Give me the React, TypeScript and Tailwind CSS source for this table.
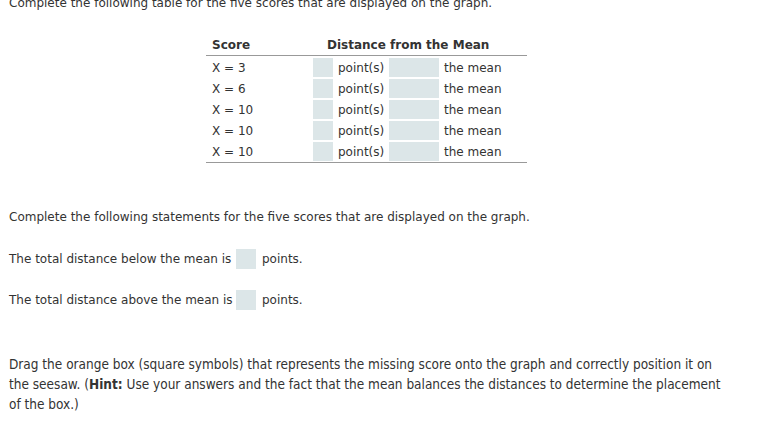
import React from "react";

const Box = ({ w = "w-[20px]", h = "h-[19px]" }: { w?: string; h?: string }) => (
  <span className={`inline-block ${w} ${h} bg-[#dce6e8]`} />
);

const rows = ["X = 3", "X = 6", "X = 10", "X = 10", "X = 10"];

export default function App() {
  return (
    <div className="w-[758px] h-[434px] overflow-hidden bg-white text-[#333] text-[12px] font-['Verdana','DejaVu_Sans',sans-serif]">
      <p className="pl-[9px] -mt-[4px] leading-[15px]">
        Complete the following table for the five scores that are displayed on the graph.
      </p>

      <div className="ml-[206px] mt-[23px] w-[321px]">
        <div className="flex h-[22px] items-center border-b border-[#999] font-bold">
          <div className="w-[107px] pl-[6px]">Score</div>
          <div className="pl-[14px]">Distance from the Mean</div>
        </div>
        <div className="pt-[1px] border-b border-[#999]">
          {rows.map((r, i) => (
            <div key={i} className="flex h-[21px] items-center">
              <div className="w-[107px] pl-[6px]">{r}</div>
              <Box />
              <span className="ml-[5px] w-[51px]">point(s)</span>
              <Box w="w-[50px]" />
              <span className="ml-[5px]">the mean</span>
            </div>
          ))}
        </div>
      </div>

      <p className="pl-[9px] mt-[47px] leading-[15px]">
        Complete the following statements for the five scores that are displayed on the graph.
      </p>

      <div className="pl-[9px] mt-[24px] flex items-center h-[20px]">
        <span className="w-[227px]">The total distance below the mean is</span>
        <Box h="h-[20px]" />
        <span className="ml-[6px]">points.</span>
      </div>

      <div className="pl-[9px] mt-[21px] flex items-center h-[20px]">
        <span className="w-[227px]">The total distance above the mean is</span>
        <Box h="h-[20px]" />
        <span className="ml-[6px]">points.</span>
      </div>

      <p className="pl-[9px] w-[728px] mt-[44px] leading-[20px] text-[13.5px] font-['DejaVu_Sans_Condensed','DejaVu_Sans',sans-serif] [font-stretch:condensed]">
        Drag the orange box (square symbols) that represents the missing score onto the graph and correctly position it on the seesaw. (<b>Hint:</b> Use your answers and the fact that the mean balances the distances to determine the placement of the box.)
      </p>
    </div>
  );
}
